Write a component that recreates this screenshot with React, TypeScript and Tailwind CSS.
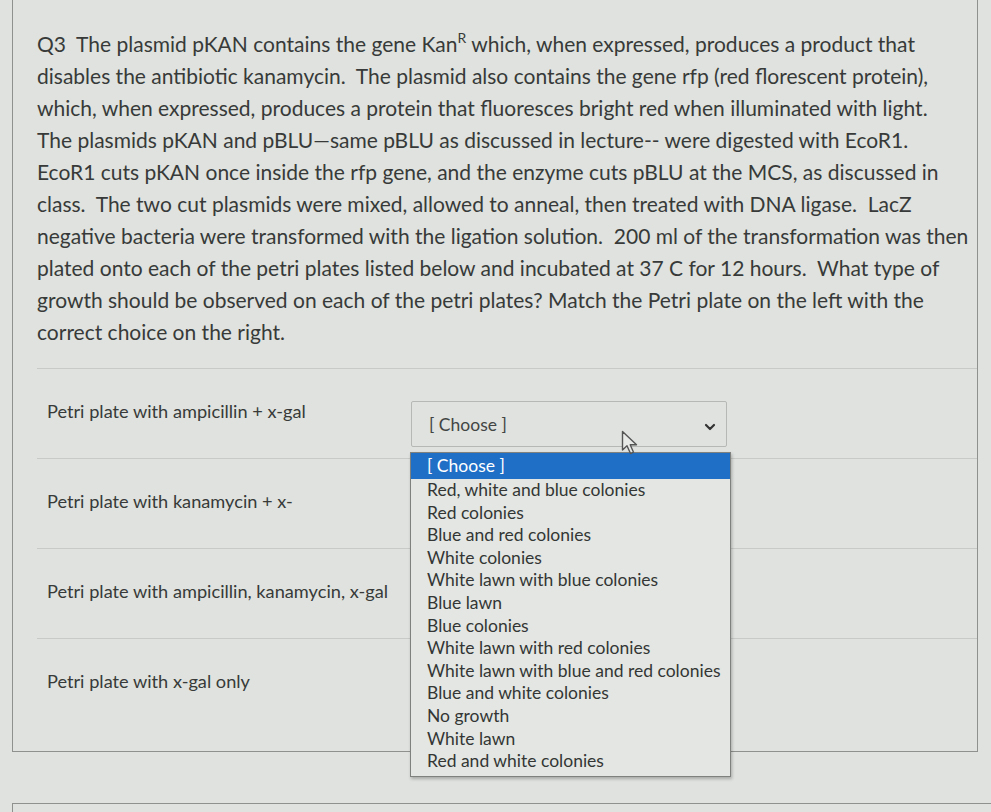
import React from "react";

const lines: React.ReactNode[] = [
  <>Q3&nbsp; The plasmid pKAN contains the gene Kan<sup className="text-[14px] -top-[9px]">R</sup> which, when expressed, produces a product that</>,
  <>disables the antibiotic kanamycin.&nbsp; The plasmid also contains the gene rfp (red florescent protein),</>,
  <>which, when expressed, produces a protein that fluoresces bright red when illuminated with light.</>,
  <>The plasmids pKAN and pBLU—same pBLU as discussed in lecture-- were digested with EcoR1.</>,
  <>EcoR1 cuts pKAN once inside the rfp gene, and the enzyme cuts pBLU at the MCS, as discussed in</>,
  <>class.&nbsp; The two cut plasmids were mixed, allowed to anneal, then treated with DNA ligase.&nbsp; LacZ</>,
  <>negative bacteria were transformed with the ligation solution.&nbsp; 200 ml of the transformation was then</>,
  <>plated onto each of the petri plates listed below and incubated at 37 C for 12 hours.&nbsp; What type of</>,
  <>growth should be observed on each of the petri plates? Match the Petri plate on the left with the</>,
  <>correct choice on the right.</>,
];

const options = [
  "Red, white and blue colonies",
  "Red colonies",
  "Blue and red colonies",
  "White colonies",
  "White lawn with blue colonies",
  "Blue lawn",
  "Blue colonies",
  "White lawn with red colonies",
  "White lawn with blue and red colonies",
  "Blue and white colonies",
  "No growth",
  "White lawn",
  "Red and white colonies",
];

const rows = [
  "Petri plate with ampicillin + x-gal",
  "Petri plate with kanamycin + x-",
  "Petri plate with ampicillin, kanamycin, x-gal",
  "Petri plate with x-gal only",
];

export default function App() {
  return (
    <div
      className="relative w-[991px] h-[812px] overflow-hidden bg-[#dfe2de] text-[#373a39]"
      style={{ fontFamily: "Lato, 'Open Sans', sans-serif" }}
    >
      <div className="ml-[12px] mr-[13px] h-[752px] border-l border-r border-b border-[#8e918e]">
        <div className="pl-[24px] pt-[28px] text-[21px] leading-[32px]">
          {lines.map((l, i) => (
            <div key={i} className="whitespace-nowrap">
              {l}
            </div>
          ))}
        </div>
        <div className="mt-[20px] ml-[24px] border-t border-[#c7cac6]" />
        {rows.map((r, i) => (
          <div
            key={i}
            className={`ml-[24px] h-[90px] flex ${i < 3 ? "border-b border-[#c7cac6]" : ""}`}
          >
            <div className="w-[374px] pl-[10px] pt-[30px] text-[18.2px] leading-[24px] whitespace-nowrap">
              {r}
            </div>
            {i === 0 && (
              <div className="mt-[32px] w-[316px] h-[46px] border border-[#b5b8b4] rounded-[2px] flex items-center justify-between pl-[17px] pr-[10px] text-[17.5px] text-[#424544]">
                <span className="pt-[2px]">[ Choose ]</span>
                <svg width="12" height="8" viewBox="0 0 12 8" className="mt-[6px]">
                  <path d="M2 2 L6 6 L10 2" fill="none" stroke="#333" strokeWidth="2.2" strokeLinecap="round" strokeLinejoin="round" />
                </svg>
              </div>
            )}
          </div>
        ))}
      </div>
      <div className="mt-[51px] ml-[12px] h-[40px] border-t border-l border-[#8e918e]" />

      {/* open dropdown list */}
      <div className="absolute left-[410px] top-[452px] w-[321px] bg-[#e3e6e2] border border-[#7e817e] shadow-[1px_2px_3px_rgba(0,0,0,0.25)] text-[17.5px] leading-[22.6px] text-[#333635] pb-[3px]">
        <div className="bg-[#1f6fc7] text-white pl-[16px] h-[26px] leading-[26px]">[ Choose ]</div>
        {options.map((o) => (
          <div key={o} className="pl-[16px] whitespace-nowrap">
            {o}
          </div>
        ))}
      </div>

      {/* mouse cursor */}
      <svg className="absolute left-[621px] top-[430px]" width="20" height="28" viewBox="0 0 20 28">
        <path
          d="M1.5 1.5 L1.5 20 L6 15.8 L9.5 23.5 L12.5 22.2 L9.2 14.8 L15.5 14.8 Z"
          fill="#e8eae7"
          stroke="#555"
          strokeWidth="1.4"
          strokeLinejoin="round"
        />
      </svg>
    </div>
  );
}
